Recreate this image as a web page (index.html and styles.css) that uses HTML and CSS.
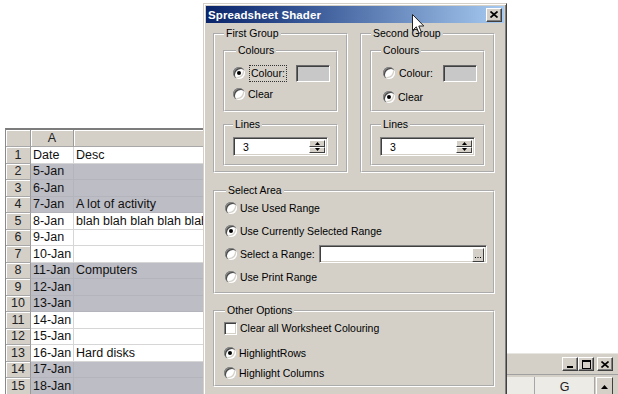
FILE: index.html
```html
<!DOCTYPE html>
<html>
<head>
<meta charset="utf-8">
<title>Spreadsheet Shader</title>
<link rel="stylesheet" href="styles.css">
</head>
<body>
<div class="desktop">

  <div class="sheet">
    <div class="grid">
      <div class="hd"></div><div class="hd">A</div><div class="hd"></div>
      <div class="hd">1</div><div class="c">Date</div><div class="c">Desc</div>
      <div class="hd">2</div><div class="c s">5-Jan</div><div class="c s"></div>
      <div class="hd">3</div><div class="c s">6-Jan</div><div class="c s"></div>
      <div class="hd">4</div><div class="c s">7-Jan</div><div class="c s">A lot of activity</div>
      <div class="hd">5</div><div class="c">8-Jan</div><div class="c">blah blah blah blah blah blah</div>
      <div class="hd">6</div><div class="c">9-Jan</div><div class="c"></div>
      <div class="hd">7</div><div class="c">10-Jan</div><div class="c"></div>
      <div class="hd">8</div><div class="c s">11-Jan</div><div class="c s">Computers</div>
      <div class="hd">9</div><div class="c s">12-Jan</div><div class="c s"></div>
      <div class="hd">10</div><div class="c s">13-Jan</div><div class="c s"></div>
      <div class="hd">11</div><div class="c">14-Jan</div><div class="c"></div>
      <div class="hd">12</div><div class="c">15-Jan</div><div class="c"></div>
      <div class="hd">13</div><div class="c">16-Jan</div><div class="c">Hard disks</div>
      <div class="hd">14</div><div class="c s">17-Jan</div><div class="c s"></div>
      <div class="hd">15</div><div class="c s">18-Jan</div><div class="c s"></div>
    </div>
  </div>

  <div class="win2">
    <div class="win2-bar">
      <span class="wbtn"><svg width="8" height="8" viewBox="0 0 8 8"><rect x="1" y="6" width="6" height="2" fill="#000"/></svg></span>
      <span class="wbtn"><svg width="9" height="9" viewBox="0 0 9 9"><rect x="0.5" y="0.5" width="8" height="8" fill="none" stroke="#000"/><rect x="0" y="0" width="9" height="2" fill="#000"/></svg></span>
      <span class="wbtn gap"><svg width="8" height="7" viewBox="0 0 8 7"><path d="M0.5 0.5 L7.5 6.5 M7.5 0.5 L0.5 6.5" stroke="#000" stroke-width="1.6"/></svg></span>
    </div>
    <div class="win2-heads">
      <span class="wh f"></span>
      <span class="wh g">G</span>
      <span class="sbtn"><svg width="7" height="4" viewBox="0 0 7 4"><path d="M0 4 L3.5 0 L7 4 Z" fill="#000"/></svg></span>
    </div>
  </div>

  <div class="dialog">
    <div class="titlebar">
      <span class="title">Spreadsheet Shader</span>
      <span class="closebtn"><svg width="8" height="7" viewBox="0 0 8 7"><path d="M0.5 0.5 L7.5 6.5 M7.5 0.5 L0.5 6.5" stroke="#000" stroke-width="1.7"/></svg></span>
    </div>
    <div class="dbody">
      <div class="grouprow">
        <fieldset class="group">
          <legend>First Group</legend>
          <fieldset class="sub colours">
            <legend class="lg-col">Colours</legend>
            <div class="opt first"><span class="radio on"></span><span class="focus">Colour:</span><span class="swatch"></span></div>
            <div class="opt"><span class="radio"></span><span>Clear</span></div>
          </fieldset>
          <fieldset class="sub lines">
            <legend>Lines</legend>
            <div class="spin"><span class="spinval">3</span><span class="spinbtns"><span class="sb"><svg width="5" height="3" viewBox="0 0 5 3"><path d="M0 3 L2.5 0 L5 3 Z" fill="#000"/></svg></span><span class="sb"><svg width="5" height="3" viewBox="0 0 5 3"><path d="M0 0 L2.5 3 L5 0 Z" fill="#000"/></svg></span></span></div>
          </fieldset>
        </fieldset>

        <fieldset class="group">
          <legend>Second Group</legend>
          <fieldset class="sub colours">
            <legend class="lg-col2">Colours</legend>
            <div class="opt first shift"><span class="radio"></span><span class="plain">Colour:</span><span class="swatch"></span></div>
            <div class="opt low shift"><span class="radio on"></span><span>Clear</span></div>
          </fieldset>
          <fieldset class="sub lines">
            <legend class="lg-col2">Lines</legend>
            <div class="spin"><span class="spinval">3</span><span class="spinbtns"><span class="sb"><svg width="5" height="3" viewBox="0 0 5 3"><path d="M0 3 L2.5 0 L5 3 Z" fill="#000"/></svg></span><span class="sb"><svg width="5" height="3" viewBox="0 0 5 3"><path d="M0 0 L2.5 3 L5 0 Z" fill="#000"/></svg></span></span></div>
          </fieldset>
        </fieldset>
      </div>

      <fieldset class="wide area">
        <legend>Select Area</legend>
        <div class="opt row"><span class="radio"></span><span>Use Used Range</span></div>
        <div class="opt row"><span class="radio on"></span><span>Use Currently Selected Range</span></div>
        <div class="opt row"><span class="radio"></span><span class="rlabel">Select a Range:</span><span class="range"><span class="rbtn"><svg width="6" height="2" viewBox="0 0 6 2"><rect x="0" y="0" width="1" height="1" fill="#000"/><rect x="2.5" y="0" width="1" height="1" fill="#000"/><rect x="5" y="0" width="1" height="1" fill="#000"/></svg></span></span></div>
        <div class="opt row"><span class="radio"></span><span>Use Print Range</span></div>
      </fieldset>

      <fieldset class="wide other">
        <legend>Other Options</legend>
        <div class="opt chk"><span class="check"></span><span>Clear all Worksheet Colouring</span></div>
        <div class="opt hr"><span class="radio on"></span><span>HighlightRows</span></div>
        <div class="opt hc"><span class="radio"></span><span>Highlight Columns</span></div>
      </fieldset>
    </div>
  </div>

  <svg class="cursor" width="13" height="21" viewBox="0 0 13 21"><path d="M0.5 0.5 L0.5 16.5 L4.3 12.8 L7 19.3 L9.4 18.3 L6.8 12 L11.8 12 Z" fill="#fff" stroke="#222" stroke-width="1" stroke-linejoin="round"/></svg>
</div>
</body>
</html>
```

FILE: styles.css
```css
* { box-sizing: border-box; }
html, body { margin: 0; padding: 0; }
body {
  width: 618px;
  height: 394px;
  overflow: hidden;
  background: #fff;
  font-family: "Liberation Sans", Arial, sans-serif;
  color: #000;
}
.desktop { position: relative; width: 618px; height: 394px; overflow: hidden; }

/* ---------- spreadsheet ---------- */
.sheet {
  position: absolute;
  left: 5px;
  top: 128px;
  width: 215px;
  border-top: 2px solid #7c7c7c;
  border-left: 1px solid #8a8a8a;
}
.grid {
  display: grid;
  grid-template-columns: 25px 43px 1fr;
  grid-template-rows: 17px;
  grid-auto-rows: 16.5px;
  font-size: 12.5px;
}
.hd {
  background: #d4d0c8;
  border-right: 1px solid #9a9a9a;
  border-bottom: 1px solid #a8a8a8;
  box-shadow: inset 1px 1px 0 #fff;
  display: flex;
  align-items: center;
  justify-content: center;
  line-height: 1;
  color: #222;
}
.c {
  background: #fff;
  border-right: 1px solid #d6d6d6;
  border-bottom: 1px solid #d6d6d6;
  padding-left: 2px;
  display: flex;
  align-items: center;
  white-space: nowrap;
  line-height: 1;
  color: #111;
}
.c.s { background: #bdbdc5; border-color: #b4b4bc; }

/* ---------- background window ---------- */
.win2 {
  position: absolute;
  left: 507px;
  top: 353px;
  width: 111px;
  height: 41px;
  background: #d4d0c8;
  border-top: 1px solid #e8e6e0;
}
.win2-bar {
  display: flex;
  justify-content: flex-end;
  padding: 3px 5px 0 0;
  height: 20px;
}
.wbtn {
  width: 16px;
  height: 14px;
  background: #d4d0c8;
  border: 1px solid;
  border-color: #fff #404040 #404040 #fff;
  box-shadow: inset -1px -1px 0 #808080;
  display: flex;
  align-items: center;
  justify-content: center;
}
.wbtn.gap { margin-left: 3px; }
.win2-heads {
  display: flex;
  height: 21px;
  border-top: 1px solid #a0a0a0;
  padding-top: 2px;
}
.wh {
  height: 19px;
  background: #ecebe6;
  border-right: 1px solid #a6a6a6;
  display: flex;
  align-items: center;
  justify-content: center;
  font-size: 12.5px;
  color: #222;
}
.wh.f { width: 28px; }
.wh.g { width: 60px; }
.sbtn {
  width: 17px;
  height: 19px;
  margin-left: 1px;
  background: #d4d0c8;
  border: 1px solid;
  border-color: #fff #404040 #404040 #fff;
  display: flex;
  align-items: center;
  justify-content: center;
}

/* ---------- dialog ---------- */
.dialog {
  position: absolute;
  left: 203px;
  top: 3px;
  width: 304px;
  height: 400px;
  background: #d4d0c8;
  border: 1px solid;
  border-color: #d4d0c8 #404040 #404040 #d4d0c8;
  box-shadow: inset 1px 1px 0 #fff, inset -1px -1px 0 #808080;
  padding: 2px;
  font-size: 10.5px;
}
.titlebar {
  height: 17px;
  background: linear-gradient(to right, #0a246a 0%, #3a5a98 35%, #a6caf0 100%);
  display: flex;
  align-items: center;
  justify-content: space-between;
  padding: 0 2px 0 2px;
}
.title {
  color: #fff;
  font-weight: bold;
  font-size: 11.5px;
  letter-spacing: 0.1px;
}
.closebtn {
  width: 16px;
  height: 14px;
  background: #d4d0c8;
  border: 1px solid;
  border-color: #fff #404040 #404040 #fff;
  box-shadow: inset -1px -1px 0 #808080;
  display: flex;
  align-items: center;
  justify-content: center;
}

.dbody {
  padding: 4px 0 0 7px;
  display: flex;
  flex-direction: column;
}
fieldset {
  margin: 0;
  min-width: 0;
  border: 2px groove #fff;
}
legend {
  padding: 0 2px;
  margin-left: 1px;
  line-height: 13px;
  font-size: 10.5px;
}
.grouprow { display: flex; gap: 12px; }
.group {
  width: 135px;
  height: 146px;
  padding: 4px 0 0 8px;
  display: flex;
  flex-direction: column;
}
.sub {
  width: 115px;
  padding: 0 6px 0 8px;
  display: flex;
  flex-direction: column;
}
.sub legend { margin-left: 0; }
.sub legend.lg-col { margin-left: 3px; }
.sub legend.lg-col2 { margin-left: 1px; }
.colours { height: 68px; }
.lines { height: 48px; margin-top: 6px; }

.opt {
  display: flex;
  align-items: center;
  height: 18px;
  gap: 3px;
  white-space: nowrap;
}
.opt.first { margin-top: 7px; }
.opt.first + .opt { margin-top: 3px; }
.opt.first + .opt.low { margin-top: 6px; }
.opt.shift { padding-left: 3px; }
.plain { padding-left: 1px; }

.radio {
  flex: none;
  position: relative;
  width: 12px;
  height: 12px;
  border-radius: 50%;
  background: #fff;
  box-shadow: inset 1px 1px 0 #8a8a8a, inset 2px 2px 0 #4a4a4a, inset -1px -1px 0 #fff, inset -2px -2px 0 #d4d0c8;
}
.radio.on::after {
  content: "";
  position: absolute;
  left: 4px;
  top: 4px;
  width: 4px;
  height: 4px;
  border-radius: 50%;
  background: #000;
}
.check {
  flex: none;
  width: 13px;
  height: 13px;
  background: #fff;
  border: 1px solid;
  border-color: #808080 #fff #fff #808080;
  box-shadow: inset 1px 1px 0 #404040, inset -1px -1px 0 #d4d0c8;
}
.focus {
  height: 17px;
  display: flex;
  align-items: center;
  padding: 0 1px;
  border: 1px dotted #333;
  margin-left: 1px;
}
.swatch {
  margin-left: auto;
  width: 34px;
  height: 17px;
  background: #c8c8c8;
  border: 1px solid;
  border-color: #6a6a6a #fff #fff #6a6a6a;
  box-shadow: inset 1px 1px 0 #404040;
}

.spin {
  margin-top: 6px;
  width: 95px;
  height: 19px;
  display: flex;
  background: #fff;
  border: 1px solid;
  border-color: #808080 #fff #fff #808080;
  box-shadow: inset 1px 1px 0 #404040, inset -1px -1px 0 #d4d0c8;
  padding: 2px 2px 2px 2px;
}
.spinval {
  flex: 1;
  display: flex;
  align-items: center;
  padding-left: 7px;
}
.spinbtns {
  width: 16px;
  display: flex;
  flex-direction: column;
}
.sb {
  flex: 1;
  background: #d4d0c8;
  border: 1px solid;
  border-color: #fff #404040 #404040 #fff;
  display: flex;
  align-items: center;
  justify-content: center;
}

.wide { width: 282px; }
.area {
  height: 110px;
  margin-top: 11px;
  padding: 2px 0 0 10px;
}
.area .row + .row { margin-top: 5px; }
.rlabel { width: 76px; }
.range {
  width: 168px;
  height: 18px;
  background: #fff;
  border: 1px solid;
  border-color: #808080 #fff #fff #808080;
  box-shadow: inset 1px 1px 0 #404040, inset -1px -1px 0 #d4d0c8;
  display: flex;
  justify-content: flex-end;
  padding: 2px;
}
.rbtn {
  width: 12px;
  height: 14px;
  background: #d4d0c8;
  border: 1px solid;
  border-color: #fff #404040 #404040 #fff;
  display: flex;
  align-items: flex-end;
  justify-content: center;
  padding-bottom: 2px;
}

.other {
  height: 83px;
  margin-top: 10px;
  padding: 2px 0 0 9px;
}
.opt.hr { margin-top: 7px; }
.opt.hc { margin-top: 2px; }

.cursor {
  position: absolute;
  left: 412px;
  top: 14px;
}
```
